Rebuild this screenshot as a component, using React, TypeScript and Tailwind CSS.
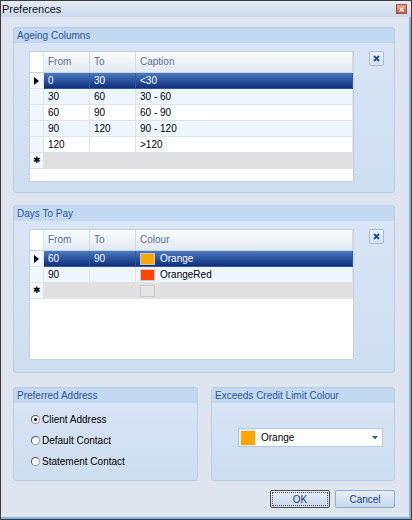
import React from "react";

type Col = { label: string; w: string };

const font = { fontFamily: '"Liberation Sans", Arial, sans-serif' };

function Group({
  title,
  className,
  children,
}: {
  title: string;
  className: string;
  children: React.ReactNode;
}) {
  return (
    <div
      className={`flex flex-col rounded-[3px] border border-[#b9cce4] bg-gradient-to-b from-[#d9e6f5] to-[#cddef1] ${className}`}
    >
      <div className="h-[15px] shrink-0 rounded-t-[3px] bg-[#c3d9f1] pl-[3px] text-[10px] leading-[15px] text-[#2a559a]">
        {title}
      </div>
      {children}
    </div>
  );
}

function Arrow() {
  return (
    <svg width="5" height="8" viewBox="0 0 5 8">
      <path d="M0 0 L5 4 L0 8 Z" fill="#000" />
    </svg>
  );
}

function DeleteBtn() {
  return (
    <div className="flex h-[15px] w-[15px] items-center justify-center rounded-[2px] border border-[#a9bcd8] bg-gradient-to-b from-[#eef3fa] to-[#d4e1f1]">
      <svg width="7" height="7" viewBox="0 0 7 7">
        <path d="M1 1 L6 6 M6 1 L1 6" stroke="#1d4a94" strokeWidth="1.8" />
      </svg>
    </div>
  );
}

type Cell = { text: string; swatch?: string; empty?: boolean };

function Grid({ cols, rows }: { cols: Col[]; rows: Cell[][] }) {
  return (
    <div className="h-[131px] w-[325px] border border-[#c5d0de] bg-white">
      <div className="flex h-[21px] bg-gradient-to-b from-[#fbfcfe] to-[#e3e9f2] border-b border-[#c9d3e0]">
        <div className="w-[14px] bg-white border-r border-[#dde3eb]" />
        {cols.map((c) => (
          <div
            key={c.label}
            className={`${c.w} border-r border-[#d3dbe6] pl-[4px] text-[10px] leading-[20px] text-[#59708f]`}
          >
            {c.label}
          </div>
        ))}
      </div>
      {rows.map((r, i) => {
        const sel = i === 0;
        const isNew = i === rows.length - 1;
        const bg = sel
          ? "bg-gradient-to-b from-[#4a7bc0] to-[#112d7c] text-white"
          : isNew
          ? "bg-[#e1e1e1] text-black"
          : i % 2 === 1
          ? "bg-[#eef6ff] text-black"
          : "bg-white text-black";
        return (
          <div key={i} className="flex h-[16px]">
            <div className="flex w-[14px] items-center justify-center border-r border-b border-[#dde3eb] bg-[#f4f7fb]">
              {sel ? <Arrow /> : isNew ? <span className="text-[9px] leading-none">✱</span> : null}
            </div>
            {cols.map((c, j) => {
              const cell = r[j];
              return (
                <div
                  key={j}
                  className={`${c.w} ${bg} flex items-center border-r border-b ${
                    sel ? "border-[#2f5aa0]" : "border-[#dfe3e8]"
                  } pl-[4px] text-[10px] leading-none`}
                >
                  {cell.swatch ? (
                    <span
                      className="mr-[5px] h-[12px] w-[15px] border border-[#c8c8c8]"
                      style={{ background: cell.swatch }}
                    />
                  ) : null}
                  {cell.empty ? (
                    <span className="mr-[5px] h-[12px] w-[15px] border border-[#c8c8c8] bg-[#e6e6e6]" />
                  ) : null}
                  {cell.text}
                </div>
              );
            })}
          </div>
        );
      })}
    </div>
  );
}

function Radio({ label, checked }: { label: string; checked?: boolean }) {
  return (
    <div className="flex h-[13px] items-center gap-[2px] text-[10px] text-black">
      <div className="flex h-[9px] w-[9px] items-center justify-center rounded-full border border-[#9a9a9a] border-l-[#555] border-t-[#555] bg-white">
        {checked ? <div className="h-[3px] w-[3px] rounded-full bg-black" /> : null}
      </div>
      {label}
    </div>
  );
}

export default function App() {
  const ageCols: Col[] = [
    { label: "From", w: "w-[46px]" },
    { label: "To", w: "w-[46px]" },
    { label: "Caption", w: "flex-1" },
  ];
  const ageRows: Cell[][] = [
    [{ text: "0" }, { text: "30" }, { text: "<30" }],
    [{ text: "30" }, { text: "60" }, { text: "30 - 60" }],
    [{ text: "60" }, { text: "90" }, { text: "60 - 90" }],
    [{ text: "90" }, { text: "120" }, { text: "90 - 120" }],
    [{ text: "120" }, { text: "" }, { text: ">120" }],
    [{ text: "" }, { text: "" }, { text: "" }],
  ];
  const dayCols: Col[] = [
    { label: "From", w: "w-[46px]" },
    { label: "To", w: "w-[46px]" },
    { label: "Colour", w: "flex-1" },
  ];
  const dayRows: Cell[][] = [
    [{ text: "60" }, { text: "90" }, { text: "Orange", swatch: "#ffa500" }],
    [{ text: "90" }, { text: "" }, { text: "OrangeRed", swatch: "#ff4500" }],
    [{ text: "" }, { text: "" }, { text: "", empty: true }],
  ];

  return (
    <div
      style={font}
      className="flex h-[520px] w-[412px] flex-col border border-[#3c3c3c] bg-[#dfe5ee]"
    >
      <div className="flex h-[16px] shrink-0 items-center justify-between bg-gradient-to-b from-[#e4ecf6] to-[#cad9ec] pl-[1px] pr-[4px]">
        <span className="text-[11px] text-[#111]">Preferences</span>
        <div className="flex h-[10px] w-[11px] items-center justify-center border border-[#a2533c] bg-gradient-to-b from-[#e9a48c] to-[#c85b3d]">
          <svg width="5" height="5" viewBox="0 0 5 5">
            <path d="M0.5 0.5 L4.5 4.5 M4.5 0.5 L0.5 4.5" stroke="#fff" strokeWidth="1.3" />
          </svg>
        </div>
      </div>
      <div className="flex flex-1 flex-col border-r-2 border-b-2 border-[#7fb3e0] pl-[12px] pr-[14px] pt-[10px]">
        <Group title="Ageing Columns" className="h-[166px]">
          <div className="flex gap-[15px] pl-[15px] pt-[8px]">
            <Grid cols={ageCols} rows={ageRows} />
            <DeleteBtn />
          </div>
        </Group>
        <Group title="Days To Pay" className="mt-[12px] h-[168px]">
          <div className="flex gap-[15px] pl-[15px] pt-[8px]">
            <Grid cols={dayCols} rows={dayRows} />
            <DeleteBtn />
          </div>
        </Group>
        <div className="mt-[14px] flex gap-[13px]">
          <Group title="Preferred Address" className="h-[94px] w-[185px]">
            <div className="flex flex-col gap-[8px] pl-[17px] pt-[10px]">
              <Radio label="Client Address" checked />
              <Radio label="Default Contact" />
              <Radio label="Statement Contact" />
            </div>
          </Group>
          <Group title="Exceeds Credit Limit Colour" className="h-[94px] flex-1">
            <div className="pl-[26px] pt-[25px]">
              <div className="flex h-[19px] w-[145px] items-center border border-[#b6c8de] bg-white">
                <div className="flex h-full w-[17px] items-center justify-center bg-[#e4ecf6]">
                  <span className="h-[14px] w-[14px] bg-[#ffa500]" />
                </div>
                <span className="flex-1 pl-[5px] text-[10px] text-black">Orange</span>
                <svg width="6" height="4" viewBox="0 0 6 4" className="mr-[4px]">
                  <path d="M0 0 L6 0 L3 3.5 Z" fill="#3d5f95" />
                </svg>
              </div>
            </div>
          </Group>
        </div>
        <div className="mt-[9px] flex justify-end gap-[5px]">
          <button className="h-[18px] w-[60px] rounded-[2px] border border-[#4c4c4c] bg-gradient-to-b from-[#e6eef8] to-[#c7d8ee] p-[1px] text-[10px] text-[#1d3f74]">
            <div className="flex h-full w-full items-center justify-center border border-dotted border-[#555]">
              OK
            </div>
          </button>
          <button className="h-[18px] w-[60px] rounded-[2px] border border-[#93aacb] bg-gradient-to-b from-[#e6eef8] to-[#c7d8ee] text-[10px] text-[#1d3f74]">
            Cancel
          </button>
        </div>
      </div>
    </div>
  );
}
